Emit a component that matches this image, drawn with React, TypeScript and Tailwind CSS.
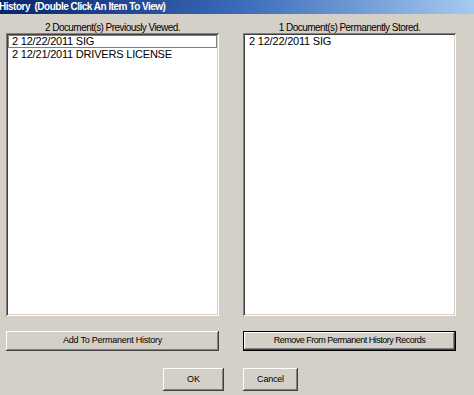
const sunken =
  "bg-white shadow-[inset_1px_1px_#808080,inset_-1px_-1px_#ffffff,inset_2px_2px_#404040,inset_-2px_-2px_#d4d0c8]";
const raised =
  "bg-[#d4d0c8] shadow-[inset_-1px_-1px_#404040,inset_1px_1px_#ffffff,inset_-2px_-2px_#808080,inset_2px_2px_#d4d0c8]";

function ListBox({ items, focus }: { items: string[]; focus?: boolean }) {
  return (
    <div className={`${sunken} h-[283px] w-[213px] p-[2px]`}>
      {items.map((it, i) => (
        <div
          key={i}
          className={`h-[13px] pl-[4px] text-[11px] leading-[13px] tracking-[-0.2px] text-black ${
            focus && i === 0 ? "outline outline-1 -outline-offset-1 outline-[#808080]" : ""
          }`}
        >
          {it}
        </div>
      ))}
    </div>
  );
}

export default function App() {
  return (
    <div className="h-[395px] w-[474px] overflow-hidden bg-[#d4d0c8] font-['Liberation_Sans',Arial,sans-serif]">
      <div className="flex h-[14px] items-center bg-gradient-to-r from-[#0a246a] via-[#3a6ab8] to-[#a6caf0]">
        <span className="ml-[-1px] whitespace-pre text-[10px] font-bold leading-none text-white tracking-[-0.5px]">
          History  (Double Click An Item To View)
        </span>
      </div>

      <div className="flex gap-[24px] pl-[6px]">
        <div className="flex flex-col">
          <div className="h-[19px] pt-[8px] text-center text-[10px] leading-[11px] text-black tracking-[-0.55px]">
            2 Document(s) Previously Viewed.
          </div>
          <ListBox items={["2 12/22/2011 SIG", "2 12/21/2011 DRIVERS LICENSE"]} focus />
          <button className={`${raised} mt-[15px] h-[20px] w-[213px] text-[9px] text-black tracking-[-0.25px]`}>
            Add To Permanent  History
          </button>
        </div>
        <div className="flex flex-col">
          <div className="h-[19px] pt-[8px] text-center text-[10px] leading-[11px] text-black tracking-[-0.55px]">
            1 Document(s) Permanently Stored.
          </div>
          <ListBox items={["2 12/22/2011 SIG"]} />
          <button
            className={`mt-[15px] h-[20px] w-[213px] bg-[#d4d0c8] text-[9px] text-black tracking-[-0.5px] shadow-[inset_-1px_-1px_#000000,inset_1px_1px_#000000,inset_-2px_-2px_#404040,inset_2px_2px_#ffffff,inset_-3px_-3px_#808080]`}
          >
            Remove From Permanent History Records
          </button>
        </div>
      </div>

      <div className="mt-[17px] flex pl-[163px]">
        <button className={`${raised} h-[23px] w-[61px] text-[9px] text-black`}>OK</button>
        <button className={`${raised} ml-[19px] h-[23px] w-[55px] text-[9px] text-black tracking-[-0.2px]`}>Cancel</button>
      </div>
    </div>
  );
}
